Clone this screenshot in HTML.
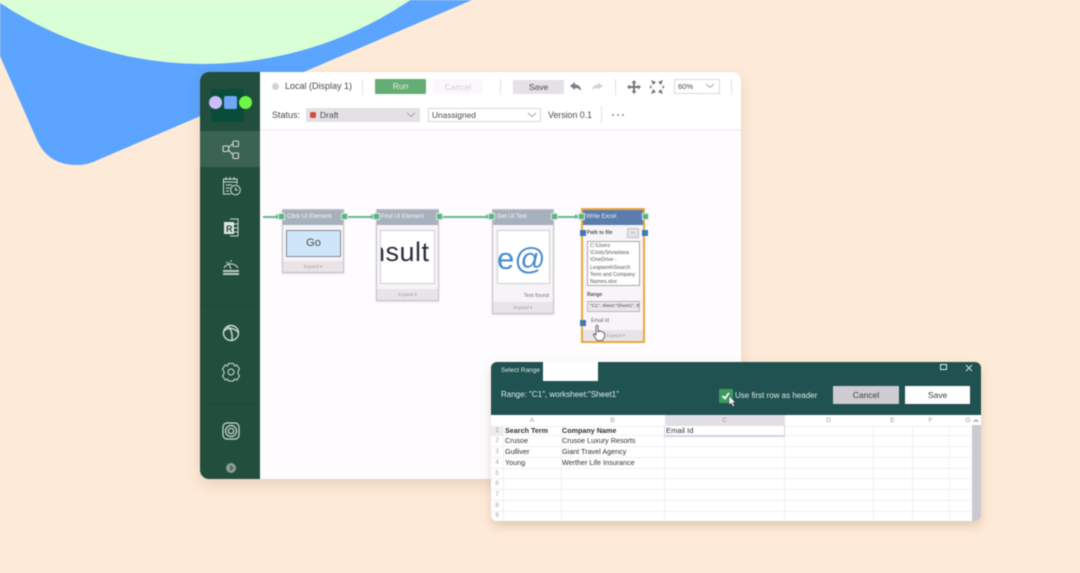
<!DOCTYPE html>
<html><head><meta charset="utf-8">
<style>
html,body{margin:0;padding:0;background:#feead8}
#p{position:relative;width:1080px;height:573px;overflow:hidden;background:#feead8;font-family:"Liberation Sans",sans-serif;color:#3b3b3f;filter:blur(.45px)}
#p div{position:absolute;box-sizing:border-box;white-space:nowrap}
.t{line-height:1}
.node{background:#f7f3f6;border:1px solid #c4c2c8;box-shadow:0 1px 2px rgba(0,0,0,.12)}
.hd{left:0;right:0;top:0;height:15px;background:#a7b1be;color:#f6f7f9;font-size:6px;line-height:15px;padding-left:4px}
.ex{left:0;right:0;bottom:0;height:11px;background:#e8e4e8;color:#a09ea4;font-size:4.5px;line-height:11px;text-align:center}
.pt{width:7px;height:7px;background:#5bb184;border:1px solid #d5ecdf}
.bp{width:6px;height:6px;background:#3f78b4}
.rh{left:491px;width:12px;text-align:center;color:#a5a5a8;font-size:6.5px;line-height:10px}
.c{color:#333;font-size:7.2px;line-height:10px}
.h{position:absolute;height:1px;left:491px;width:480px;background:#f0eff1}
.v{position:absolute;width:1px;top:426px;height:94px;background:#f0eff2}
.cl{top:415px;height:11px;font-size:6.5px;line-height:11px;color:#9a9a9e;text-align:center}
</style></head><body>
<div id="p">
<svg width="1080" height="573" style="position:absolute;left:0;top:0">
<path d="M0 0H472L93 162Q85 165 77 165Q48 165 37 140L0 56Z" fill="#5ba4ff"/>
<circle cx="203" cy="-304" r="368" fill="#d9ffd6"/>
</svg>

<div style="left:200px;top:72px;width:541px;height:407px;border-radius:9px;background:#fff;box-shadow:0 6px 14px rgba(120,90,60,.16);overflow:hidden">
 <div style="left:0;top:0;width:60px;height:407px;background:#224f3d"></div>
 <div style="left:0;top:59px;width:60px;height:36px;background:#3b6353"></div>
 <div style="left:60px;top:58px;width:481px;height:349px;background:#fefcfe"></div>
 <div style="left:60px;top:57px;width:481px;height:2px;background:#f5f3f5"></div>
 <div style="left:3px;top:233px;width:54px;height:1px;background:#1d4635"></div>
 <div style="left:3px;top:331px;width:54px;height:1px;background:#1d4635"></div>
</div>

<div style="left:211px;top:89px;width:33px;height:33px;background:#0a4c3a"></div>
<div style="left:209px;top:96px;width:13px;height:13px;border-radius:50%;background:#cdbcf9"></div>
<div style="left:224px;top:96px;width:13px;height:13px;border-radius:2px;background:#6ea6f8"></div>
<div style="left:239px;top:96px;width:13px;height:13px;border-radius:50%;background:#6cf844"></div>

<svg width="60" height="407" viewBox="0 0 60 407" style="position:absolute;left:200px;top:72px" fill="none" stroke="#cfdad4" stroke-width="1">
 <g stroke-width="1.1"><rect x="23" y="74" width="5.500" height="5.500" rx="1"/><rect x="33" y="69" width="5.500" height="5.500" rx="1"/><rect x="33" y="81" width="5.500" height="5.500" rx="1"/><path d="M28.500 75.500L33 71.500M28.500 78L33 83"/></g>
 <g><path d="M31 122H23.500V107H37V112"/><path d="M23.500 110H37M26 105V108M30 105V108M34 105V108M26 113H32M26 116H30M26 119H29"/><circle cx="35.500" cy="118" r="4.800"/><path d="M35.500 115.500V118H38"/></g>
 <g><path d="M30 147H38V164H30"/><rect x="24" y="150" width="10" height="12" fill="#dfe7e3" stroke="none"/><path d="M34 152H38M34 156H38M34 160H38"/><text x="26" y="160" font-family="Liberation Sans" font-size="9" font-weight="bold" fill="#224f3d" stroke="none">R</text></g>
 <g><path d="M24 196A8 8 0 0 1 38 196"/><path d="M31 197L28 190M31 188V190M26 190L27 191"/><rect x="23" y="198" width="16" height="2" fill="#bccac3" stroke="none"/><rect x="23" y="201" width="16" height="2" fill="#bccac3" stroke="none"/></g>
 <g stroke-width="1.4"><circle cx="31" cy="261" r="7.500"/><path d="M24 259Q30 253 38 260M27 254Q33 258 32 268"/></g>
 <g><circle cx="31" cy="300" r="3"/><path d="M28.500 291.500H33.500L34.500 294L36.800 293L39.500 297L38 299.500V301.500L39.500 304L36.800 308L34.500 307L33.500 309H28.500L27.500 307L25.200 308L22.500 304L24 301.500V299.500L22.500 297L25.200 293L27.500 294Z"/></g>
 <g stroke-width="1.2"><rect x="23" y="351" width="16" height="16" rx="4"/><circle cx="31" cy="359" r="5.500"/><circle cx="31" cy="359" r="2.700"/></g>
 <circle cx="31" cy="396" r="5" fill="#8d9b94" stroke="none"/><path d="M30 394L32.500 396L30 398" stroke="#2c5545" stroke-width="1.300"/>
</svg>

<!-- toolbar -->
<div style="left:272px;top:83px;width:7px;height:7px;border-radius:50%;background:#d5d2d8"></div>
<div class="t" style="left:285px;top:82px;font-size:9px;color:#4a4a4e">Local (Display 1)</div>
<div style="left:362px;top:79px;width:1px;height:16px;background:#e2e0e3"></div>
<div style="left:375px;top:79px;width:51px;height:15px;background:#66ad75;border-radius:1px;color:#dff0e2;font-size:8.500px;line-height:15px;text-align:center">Run</div>
<div style="left:433px;top:79px;width:50px;height:15px;background:#fbf7fb;color:#d2cfd4;font-size:8.500px;line-height:16px;text-align:center">Cancel</div>
<div style="left:500px;top:79px;width:1px;height:16px;background:#e2e0e3"></div>
<div style="left:513px;top:80px;width:51px;height:14px;background:#e4e1e7;color:#4a4a4e;font-size:8.500px;line-height:14px;text-align:center">Save</div>
<svg width="40" height="16" style="position:absolute;left:568px;top:79px"><path d="M2 7L7 3V5.500C10 5.500 13 7 13 12C11 9.500 9.500 9 7 9V11Z" fill="#807e85"/><path d="M35 7L30 3.500V5.500C27 5.500 24.500 7 24.500 11C26 9.500 28 9 30 9V10.500Z" fill="#d6d4d8"/></svg>
<div style="left:615px;top:79px;width:1px;height:16px;background:#e2e0e3"></div>
<svg width="16" height="16" style="position:absolute;left:626px;top:79px" fill="#76747b"><path d="M8 1L10.500 4H9V7H12V5.500L15 8L12 10.500V9H9V12H10.500L8 15L5.500 12H7V9H4V10.500L1 8L4 5.500V7H7V4H5.500Z"/></svg>
<svg width="16" height="16" style="position:absolute;left:649px;top:79px" fill="#76747b"><path d="M2 1L7 3L4 6ZM14 1L9 3L12 6ZM2 15L7 13L4 10ZM14 15L9 13L12 10ZM1 6L3 8L1 10ZM15 6L13 8L15 10Z"/></svg>
<div style="left:674px;top:79px;width:46px;height:15px;border:1px solid #dbd9dc;background:#fff;font-size:7.500px;line-height:13px;padding-left:3px;color:#4a4a4e">60%</div>
<svg width="10" height="6" style="position:absolute;left:705px;top:83px" fill="none" stroke="#a5a3a9"><path d="M1 1L5 4.500L9 1"/></svg>
<div style="left:731px;top:79px;width:1px;height:16px;background:#e2e0e3"></div>

<div class="t" style="left:272px;top:111px;font-size:9px;color:#4a4a4e">Status:</div>
<div style="left:306px;top:108px;width:114px;height:14px;background:#e4e1e6"></div>
<div style="left:310px;top:112px;width:6px;height:6px;border-radius:1.500px;background:#d24f3f"></div>
<div class="t" style="left:320px;top:111px;font-size:8.500px;color:#4a4a4e">Draft</div>
<svg width="10" height="6" style="position:absolute;left:406px;top:112px" fill="none" stroke="#a5a3a9"><path d="M1 1L5 4.500L9 1"/></svg>
<div style="left:428px;top:108px;width:113px;height:14px;border:1px solid #d8d6da;background:#fff;font-size:8.300px;line-height:13px;padding-left:3px;color:#4a4a4e">Unassigned</div>
<svg width="10" height="6" style="position:absolute;left:527px;top:112px" fill="none" stroke="#a5a3a9"><path d="M1 1L5 4.500L9 1"/></svg>
<div class="t" style="left:548px;top:111px;font-size:8.800px;color:#4a4a4e">Version 0.1</div>
<div style="left:601px;top:106px;width:1px;height:17px;background:#e2e0e3"></div>
<svg width="14" height="4" style="position:absolute;left:611px;top:113px" fill="#8d8b92"><circle cx="2" cy="2" r="1"/><circle cx="7" cy="2" r="1"/><circle cx="12" cy="2" r="1"/></svg>

<!-- canvas connectors -->
<svg width="400" height="20" style="position:absolute;left:260px;top:207px" fill="#66b78e"><path d="M3 9H17V11H3ZM16 7L21 10L16 12ZM86 9H112V11H86ZM111 7L116 10L111 12ZM182 9H227V11H182ZM226 7L231 10L226 12ZM298 9H316V11H298ZM315 7L320 10L315 12Z"/></svg>

<!-- node 1 -->
<div class="node" style="left:282px;top:209px;width:62px;height:64px"><div class="hd">Click UI Element</div><div class="ex">Expand ▾</div>
 <div style="left:3px;top:20px;width:55px;height:27px;background:#cfe6f8;border:1.500px solid #7f8c9c;color:#4a4a4e;font-size:11px;line-height:24px;text-align:center">Go</div></div>
<div class="pt" style="left:278px;top:213px"></div><div class="pt" style="left:341px;top:213px"></div>
<!-- node 2 -->
<div class="node" style="left:376px;top:209px;width:63px;height:92px"><div class="hd">Find UI Element</div><div class="ex">Expand ▾</div>
 <div style="left:3px;top:20px;width:55px;height:54px;background:#fff;border:1px solid #cfcfd4;overflow:hidden;color:#2a2f3a;font-size:27px;line-height:42px;font-weight:400"><span style="position:absolute;left:-11px;top:0;letter-spacing:.5px">nsult</span></div></div>
<div class="pt" style="left:373px;top:213px"></div><div class="pt" style="left:436px;top:213px"></div>
<!-- node 3 -->
<div class="node" style="left:492px;top:209px;width:62px;height:105px"><div class="hd">Get UI Text</div><div class="ex">Expand ▾</div>
 <div style="left:4px;top:20px;width:53px;height:54px;background:#fff;border:1px solid #cfcfd4;overflow:hidden;color:#4a8bd0;font-size:31px;line-height:56px"><span style="position:absolute;left:-1px;top:0">e@</span></div>
 <div class="t" style="right:4px;top:84px;font-size:5.500px;color:#77757b">Text found</div></div>
<div class="pt" style="left:488px;top:213px"></div><div class="pt" style="left:551px;top:213px"></div>
<!-- node 4 -->
<div style="left:581px;top:208px;width:64px;height:135px;border:2px solid #e7a93f;background:#f8f5f8"></div>
<div style="left:583px;top:210px;width:60px;height:15px;background:#5c7cae;color:#e8eef6;font-size:6px;line-height:14px;padding-left:3px">Write Excel</div>
<div class="t" style="left:587px;top:231px;font-size:5px;font-weight:bold;color:#55535a">Path to file</div>
<div style="left:627px;top:228px;width:12px;height:10px;background:#e4e2e6;border:1px solid #c5c3c8;font-size:5px;line-height:6px;text-align:center">...</div>
<div style="left:587px;top:241px;width:53px;height:45px;background:#fff;border:1px solid #a9a7ae;font-size:5.200px;line-height:7.200px;color:#55535a;padding:1px 2px;white-space:pre">C:\Users
\CristySrivastava
\OneDrive -
Leapwork\Search
Term and Company
Names.xlsx</div>
<div class="t" style="left:587px;top:293px;font-size:5px;font-weight:bold;color:#55535a">Range</div>
<div style="left:587px;top:301px;width:53px;height:11px;background:#e9e7ea;border:1px solid #bab8be;font-size:4.800px;line-height:9px;padding-left:2px;color:#44424a;overflow:hidden">"C1", sheet:"Sheet1", B</div>
<div class="t" style="left:591px;top:319px;font-size:5px;color:#66646a">Email Id</div>
<div style="left:583px;top:330px;width:60px;height:11px;background:#e8e4e8;color:#a09ea4;font-size:4.500px;line-height:11px;text-align:center">&nbsp;&nbsp;&nbsp;&nbsp;Expand ▾</div>
<div class="pt" style="left:578px;top:213px"></div><div class="pt" style="left:642px;top:213px"></div>
<div class="bp" style="left:580px;top:230px"></div><div class="bp" style="left:642px;top:230px"></div><div class="bp" style="left:580px;top:320px"></div>
<svg width="14" height="18" style="position:absolute;left:592px;top:324px" fill="#fff" stroke="#444" stroke-width=".8"><path d="M4 2Q5 .500 6 2V8L7 7.500V7Q8 6.500 9 7.500Q10 7 11 8.500Q12.500 8.500 12.500 10V13L10.500 16.500H5L1.500 11Q1 9.500 2.500 10L4 11Z"/></svg>

<!-- dialog -->
<div style="left:491px;top:362px;width:490px;height:159px;border-radius:6px;background:#fff;box-shadow:0 5px 10px rgba(120,90,60,.22);overflow:hidden">
 <div style="left:0;top:0;width:490px;height:53px;background:#1f5250"></div>
 <div style="left:52px;top:0;width:55px;height:19px;background:#fff"></div>
 <div style="left:174px;top:53px;width:120px;height:11px;background:#e3dfe6"></div>
 <div style="left:481px;top:63px;width:9px;height:96px;background:#cdc9d2"></div>
</div>
<div class="t" style="left:501px;top:368px;font-size:6.500px;color:#dfe8e7">Select Range</div>
<div class="t" style="left:501px;top:391px;font-size:8px;color:#e3eceb">Range: "C1", worksheet:"Sheet1"</div>
<div style="left:719px;top:389px;width:14px;height:14px;background:#3b9a5f"></div>
<svg width="12" height="12" style="position:absolute;left:720px;top:390px" fill="none" stroke="#fff" stroke-width="1.800"><path d="M2.500 6L5 8.500L9 3"/></svg>
<svg width="9" height="13" style="position:absolute;left:728px;top:395px" fill="#fff" stroke="#333" stroke-width=".5"><path d="M1 1V10L3 8L5 11.500L6.500 10.800L4.800 7.500H7.500Z"/></svg>
<div class="t" style="left:735px;top:392px;font-size:8px;color:#dfe8e7">Use first row as header</div>
<div style="left:833px;top:386px;width:66px;height:18px;background:#cfcbd2;color:#3e3e42;font-size:8.500px;line-height:18px;text-align:center">Cancel</div>
<div style="left:905px;top:386px;width:65px;height:18px;background:#fff;color:#3e3e42;font-size:8.500px;line-height:18px;text-align:center">Save</div>
<div style="left:940px;top:364px;width:7px;height:6px;border:1px solid #e4ecec"></div>
<svg width="8" height="8" style="position:absolute;left:965px;top:364px" stroke="#dfe8e7" stroke-width=".9"><path d="M1 1L7 7M7 1L1 7"/></svg>

<!-- grid -->
<div class="h" style="top:426px"></div><div class="h" style="top:435px"></div><div class="h" style="top:446px"></div><div class="h" style="top:457px"></div><div class="h" style="top:468px"></div><div class="h" style="top:478px"></div><div class="h" style="top:489px"></div><div class="h" style="top:500px"></div><div class="h" style="top:511px"></div>
<div class="v" style="left:503px"></div><div class="v" style="left:561px"></div><div class="v" style="left:664px"></div><div class="v" style="left:784px"></div><div class="v" style="left:873px"></div><div class="v" style="left:912px"></div><div class="v" style="left:949px"></div>
<div class="cl" style="left:503px;width:58px">A</div><div class="cl" style="left:561px;width:103px">B</div><div class="cl" style="left:665px;width:119px">C</div><div class="cl" style="left:784px;width:89px">D</div><div class="cl" style="left:873px;width:39px">E</div><div class="cl" style="left:912px;width:37px">F</div><div class="cl" style="left:963px;width:10px">G</div>
<svg width="8" height="5" style="position:absolute;left:972px;top:418px" fill="#8d8b92"><path d="M1 4L4 1L7 4H5.500L4 2.500L2.500 4Z"/></svg>
<div style="left:491px;top:426px;width:12px;height:10px;background:#ececef"></div>
<div class="rh" style="top:426px">1</div><div class="rh" style="top:436px">2</div><div class="rh" style="top:447px">3</div><div class="rh" style="top:458px">4</div><div class="rh" style="top:469px">5</div><div class="rh" style="top:479px">6</div><div class="rh" style="top:490px">7</div><div class="rh" style="top:501px">8</div><div class="rh" style="top:511px">9</div>
<div class="c" style="left:505px;top:426px;font-weight:bold">Search Term</div>
<div class="c" style="left:562px;top:426px;font-weight:bold">Company Name</div>
<div class="c" style="left:505px;top:436px">Crusoe</div><div class="c" style="left:562px;top:436px">Crusoe Luxury Resorts</div>
<div class="c" style="left:505px;top:447px">Gulliver</div><div class="c" style="left:562px;top:447px">Giant Travel Agency</div>
<div class="c" style="left:505px;top:458px">Young</div><div class="c" style="left:562px;top:458px">Werther Life Insurance</div>
<div style="left:664px;top:426px;width:121px;height:11px;border-left:1px solid #d3d9e8;border-bottom:2px solid #cdd6e8;border-right:1px solid #cdd6e8;background:#fff"></div>
<div class="c" style="left:666px;top:426px;font-size:7.600px">Email Id</div>
</div>
</body></html>
